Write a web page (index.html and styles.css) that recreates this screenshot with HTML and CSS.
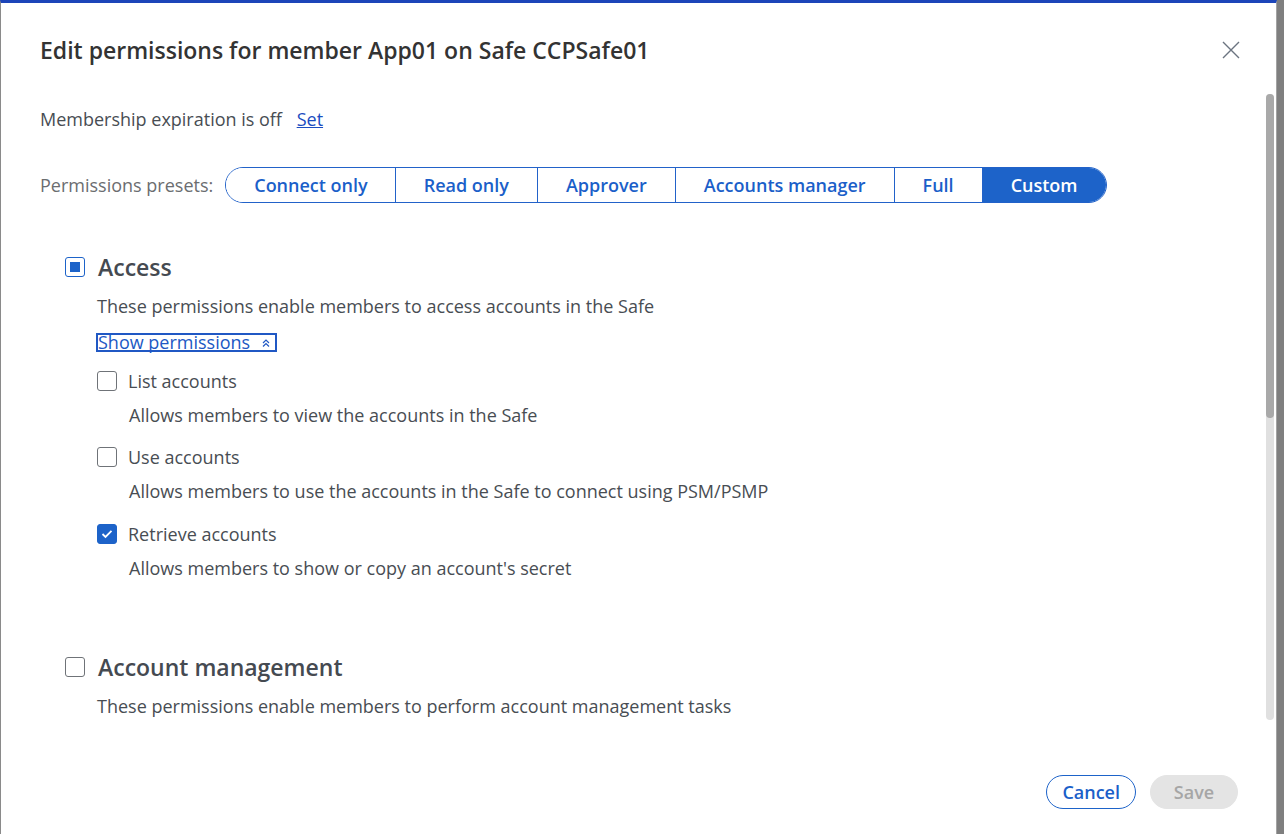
FILE: index.html
```html
<!DOCTYPE html>
<html lang="en">
<head>
<meta charset="UTF-8">
<meta name="viewport" content="width=device-width, initial-scale=1.0">
<title>Edit permissions</title>
<link rel="stylesheet" href="styles.css">
</head>
<body>

<div class="modal">
  <div class="modal-header">
    <h2>Edit permissions for member App01 on Safe CCPSafe01</h2>
    <button class="close-btn" aria-label="Close">
      <svg width="18" height="18" viewBox="0 0 18 18"><path d="M1 1L17 17M17 1L1 17" stroke="#6b7480" stroke-width="1.4" fill="none"/></svg>
    </button>
  </div>

  <div class="modal-body">
    <div class="expiry">Membership expiration is off <a href="#" class="link">Set</a></div>

    <div class="presets">
      <span class="presets-label">Permissions presets:</span>
      <div class="segmented">
        <button class="segment">Connect only</button>
        <button class="segment">Read only</button>
        <button class="segment">Approver</button>
        <button class="segment">Accounts manager</button>
        <button class="segment">Full</button>
        <button class="segment active">Custom</button>
      </div>
    </div>

    <div class="section section-first">
      <div class="section-head">
        <span class="checkbox partial"><span></span></span>
        <h3>Access</h3>
      </div>
      <div class="section-inner">
        <p class="section-desc">These permissions enable members to access accounts in the Safe</p>
        <a href="#" class="show-link">
          <span class="show-text">Show permissions</span>
          <svg width="10" height="10" viewBox="0 0 10 10"><path d="M2 5L5 2L8 5M2 8.5L5 5.5L8 8.5" stroke="#2058c4" stroke-width="1.2" fill="none"/></svg>
        </a>

        <div class="perm">
          <div class="perm-row">
            <span class="checkbox"></span>
            <span class="perm-label">List accounts</span>
          </div>
          <p class="perm-desc">Allows members to view the accounts in the Safe</p>
        </div>
        <div class="perm">
          <div class="perm-row">
            <span class="checkbox"></span>
            <span class="perm-label">Use accounts</span>
          </div>
          <p class="perm-desc">Allows members to use the accounts in the Safe to connect using PSM/PSMP</p>
        </div>
        <div class="perm">
          <div class="perm-row">
            <span class="checkbox checked">
              <svg width="12" height="10" viewBox="0 0 12 10"><path d="M1.5 5L4.5 8L10.5 1.8" stroke="#fff" stroke-width="1.8" fill="none"/></svg>
            </span>
            <span class="perm-label">Retrieve accounts</span>
          </div>
          <p class="perm-desc">Allows members to show or copy an account's secret</p>
        </div>
      </div>
    </div>

    <div class="section section-second">
      <div class="section-head">
        <span class="checkbox"></span>
        <h3>Account management</h3>
      </div>
      <div class="section-inner">
        <p class="section-desc">These permissions enable members to perform account management tasks</p>
      </div>
    </div>

    <div class="scrollbar"><div class="thumb"></div></div>
  </div>

  <div class="modal-footer">
    <button class="btn btn-outline">Cancel</button>
    <button class="btn btn-disabled" disabled>Save</button>
  </div>
</div>

</body>
</html>
```

FILE: styles.css
```css
  body {
    margin: 0;
    background-color: #7f7f7f;
    font-family: "Open Sans", "Liberation Sans", sans-serif;
    color: #484d53;
    height: 834px;
    overflow: hidden;
  }

  .modal {
    width: 1277px;
    height: 834px;
    box-sizing: border-box;
    background-color: #fff;
    border-top: 3px solid #1c45b9;
    border-left: 1px solid #8a8a8a;
    border-right: 1px solid #a3a3a3;
    display: flex;
    flex-direction: column;
  }

  .modal-header {
    height: 87px;
    box-sizing: border-box;
    padding: 32px 36px 0 39px;
    display: flex;
    justify-content: space-between;
    align-items: flex-start;
  }
  .modal-header h2 {
    margin: 0;
    font-size: 23px;
    line-height: 30px;
    font-weight: 600;
    color: #333;
  }
  .close-btn {
    background: none;
    border: none;
    padding: 0;
    margin-top: 6px;
    width: 18px;
    height: 18px;
    cursor: pointer;
  }

  .modal-body {
    flex: 1;
    position: relative;
    overflow: hidden;
    padding: 0 39px;
  }

  .expiry {
    margin-top: 17px;
    font-size: 18px;
    line-height: 24px;
  }
  .link {
    color: #1a4cc0;
    margin-left: 10px;
    text-decoration: underline;
  }

  .presets {
    margin-top: 36px;
    display: flex;
    align-items: center;
    gap: 12px;
  }
  .presets-label {
    font-size: 18px;
    color: #6b6d70;
  }
  .segmented {
    display: flex;
    height: 36px;
    box-sizing: border-box;
    border: 1px solid #2262c9;
    border-radius: 18px;
    overflow: hidden;
  }
  .segment {
    background: #fff;
    border: none;
    border-left: 1px solid #2262c9;
    padding: 0 28px;
    font-family: inherit;
    font-size: 18px;
    font-weight: 600;
    color: #1b5fc9;
    cursor: pointer;
  }
  .segment:first-child {
    border-left: none;
    padding: 0 27px 0 28px;
  }
  .segment.active {
    background-color: #1d63c9;
    color: #fff;
  }

  .section {
    margin-left: 25px;
  }
  .section-first {
    margin-top: 49px;
  }
  .section-second {
    margin-top: 72px;
  }
  .section-head {
    display: flex;
    align-items: center;
    gap: 13px;
  }
  .section-head h3 {
    margin: 0;
    font-size: 23px;
    line-height: 30px;
    font-weight: 600;
    color: #454a51;
  }
  .section-inner {
    padding-left: 32px;
  }
  .section-desc {
    margin: 12px 0 0;
    font-size: 18px;
    line-height: 24px;
  }

  .checkbox {
    width: 20px;
    height: 20px;
    box-sizing: border-box;
    border: 1px solid #6f7378;
    border-radius: 3px;
    background: #fff;
    display: inline-flex;
    align-items: center;
    justify-content: center;
    flex-shrink: 0;
  }
  .checkbox.partial {
    border-color: #1d63c9;
  }
  .checkbox.partial span {
    width: 10px;
    height: 10px;
    background-color: #1d63c9;
  }
  .checkbox.checked {
    background-color: #1d63c9;
    border-color: #1d63c9;
  }

  .show-link {
    margin-top: 15px;
    display: inline-flex;
    align-items: center;
    gap: 11px;
    height: 19px;
    box-sizing: border-box;
    border: 2px solid #2058c4;
    padding-right: 4px;
    margin-left: -1px;
    color: #2058c4;
    text-decoration: none;
    font-size: 18px;
  }
  .show-text {
    text-decoration: underline;
    line-height: 15px;
  }

  .perm {
    margin-top: 18px;
  }
  .show-link + .perm {
    margin-top: 15px;
  }
  .perm:last-child {
    margin-top: 19px;
  }
  .perm-row {
    display: flex;
    align-items: center;
    gap: 11px;
  }
  .perm-label {
    font-size: 18px;
    line-height: 24px;
  }
  .perm-desc {
    margin: 10px 0 0 32px;
    font-size: 18px;
    line-height: 24px;
  }

  .scrollbar {
    position: absolute;
    right: 2px;
    top: 4px;
    bottom: 10px;
    width: 8px;
    border-radius: 4px;
    background-color: #e0e0e0;
  }
  .thumb {
    height: 324px;
    border-radius: 4px;
    background-color: #a9a9a9;
  }

  .modal-footer {
    height: 104px;
    box-sizing: border-box;
    padding: 45px 38px 0 0;
    display: flex;
    justify-content: flex-end;
    gap: 14px;
  }
  .btn {
    height: 34px;
    border-radius: 17px;
    font-family: inherit;
    font-size: 18px;
    font-weight: 600;
    padding: 0 15px;
    cursor: pointer;
  }
  .btn-outline {
    background: #fff;
    border: 1px solid #1d63c9;
    color: #1b5fc9;
  }
  .btn-disabled {
    background-color: #e4e4e4;
    border: 1px solid #e4e4e4;
    color: #a6a6a6;
    width: 88px;
    cursor: default;
  }
```
